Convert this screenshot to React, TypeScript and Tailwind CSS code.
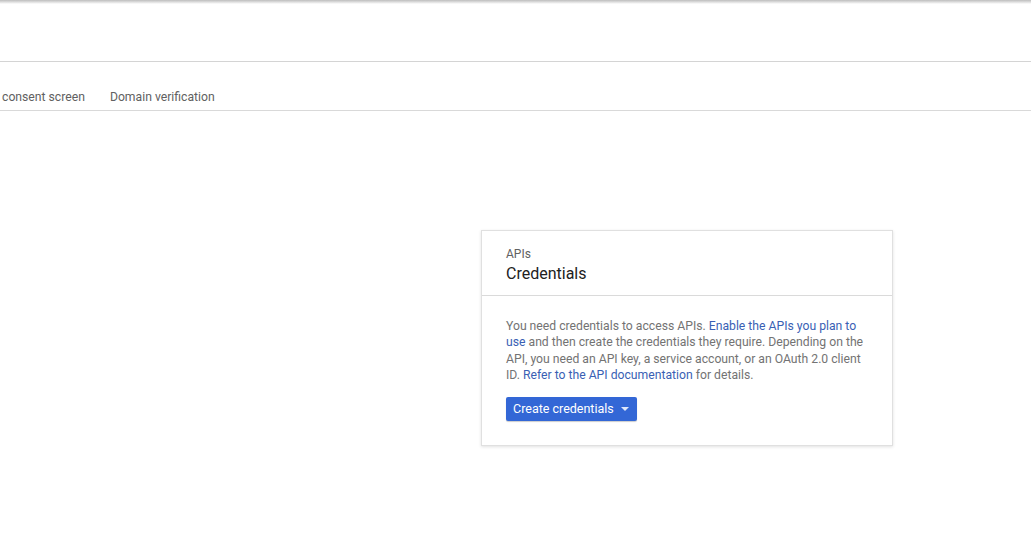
const Card = (): JSX.Element => {
  return (
    <div className="w-[412px] bg-white border border-[#e0e0e0] shadow-[0_1px_3px_rgba(0,0,0,0.12)]">
      <div className="px-6 pt-[15px] pb-[9px] border-b border-[#dadada]">
        <div className="text-[12px] leading-4 text-[#616161]">APIs</div>
        <div className="text-[16px] leading-6 text-[#212121]">Credentials</div>
      </div>
      <div className="px-6 pt-[22px] pb-6">
        <p className="w-[362px] text-[12.2px] leading-[16.4px] text-[#737373]">
          You need credentials to access APIs.{' '}
          <a className="text-[#3a5fb4]">Enable the APIs you plan to use</a> and then create the credentials they
          require. Depending on the API, you need an API key, a service account, or an OAuth 2.0 client ID.{' '}
          <a className="text-[#3a5fb4]">Refer to the API documentation</a> for details.
        </p>
        <button className="mt-[13px] h-6 w-[131px] flex items-center pl-[7px] pt-[1px] bg-[#3367d6] rounded-[2px] text-white text-[12.5px] shadow-[0_1px_1px_rgba(0,0,0,0.2)]">
          <span>Create credentials</span>
          <svg width="8" height="4" viewBox="0 0 8 4" className="ml-[7px]">
            <path d="M0 0 L8 0 L4 4 Z" fill="#dfe7fa" />
          </svg>
        </button>
      </div>
    </div>
  )
}

const App = (): JSX.Element => {
  return (
    <div className="min-h-[541px] bg-white font-['Roboto',sans-serif] overflow-hidden">
      <div className="h-[4px] bg-gradient-to-b from-[#bdbdbd] to-white" />
      <div className="h-[58px] border-b border-[#d4d4d4]" />
      <div className="h-[49px] border-b border-[#d9d9d9] flex items-end pb-[4px] text-[12.2px] text-[#616161]">
        <span className="pl-[2px]">consent screen</span>
        <span className="ml-[25px]">Domain verification</span>
      </div>
      <div className="pl-[481px] pt-[119px]">
        <Card />
      </div>
    </div>
  )
}

export default App
